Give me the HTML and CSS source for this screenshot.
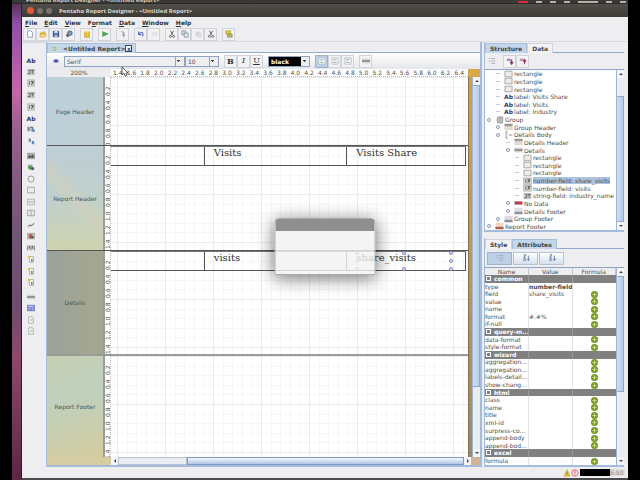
FILE: index.html
```html
<!DOCTYPE html>
<html lang="en">
<head>
  <meta charset="UTF-8" />
  <meta name="viewport" content="width=device-width, initial-scale=1.0" />
  <title>Pentaho Report Designer</title>
  <link rel="stylesheet" href="styles.css">
</head>
<body>

  <svg class="sprite" aria-hidden="true">
    <symbol id="i-new" viewBox="0 0 10 10"><path d="M2 1h4l2 2v6H2z" fill="#fff" stroke="#7d8fb5"/></symbol>
    <symbol id="i-open" viewBox="0 0 10 10"><path d="M1 3h3l1-1h3v6H1z" fill="#d9b24a"/><path d="M2 5h7L8 9H1z" fill="#f4d878" stroke="#b8923a" stroke-width=".5"/></symbol>
    <symbol id="i-save" viewBox="0 0 10 10"><path d="M1 1h8v8H1z" fill="#4b5f9c"/><path d="M3 1h4v3H3z" fill="#dfe5f2"/><path d="M3 6h4v3H3z" fill="#a9b8d8"/></symbol>
    <symbol id="i-publish" viewBox="0 0 10 10"><circle cx="6" cy="4" r="3" fill="#7e9cb4" stroke="#4d6478"/><path d="M1 6l3-1 1 3-2 1z" fill="#555"/></symbol>
    <symbol id="i-db" viewBox="0 0 10 10"><path d="M2 2h6v7H2z" fill="#ebc733"/><ellipse cx="5" cy="2" rx="3" ry="1" fill="#f8e68a"/><path d="M2 2v7h6V2" fill="none" stroke="#b98f1c" stroke-width=".8"/></symbol>
    <symbol id="i-run" viewBox="0 0 10 10"><path d="M2 2l7 3-7 3z" fill="#3fb04b" stroke="#2a8a38" stroke-width=".5"/></symbol>
    <symbol id="i-step" viewBox="0 0 10 10"><path d="M3 2l3 1v6M4 6h3" fill="none" stroke="#777"/></symbol>
    <symbol id="i-undo" viewBox="0 0 10 10"><path d="M2 2v4h4M2 6c2-5 7-3 5 2" fill="none" stroke="#5567c2" stroke-width="1.3"/></symbol>
    <symbol id="i-redo" viewBox="0 0 10 10"><path d="M8 2v4H4M8 6C6 1 1 3 3 8" fill="none" stroke="#d2d2d6"/></symbol>
    <symbol id="i-cut" viewBox="0 0 10 10"><path d="M3 1l3 5M7 1L4 6" stroke="#444" fill="none"/><circle cx="3" cy="8" r="1.3" fill="none" stroke="#555"/><circle cx="7" cy="8" r="1.3" fill="none" stroke="#555"/></symbol>
    <symbol id="i-copy" viewBox="0 0 10 10"><path d="M1 1h5v5H1z" fill="#c5d2d6" stroke="#8a9ca6"/><path d="M4 4h5v5H4z" fill="#dfe8ea" stroke="#7f949e"/></symbol>
    <symbol id="i-paste" viewBox="0 0 10 10"><path d="M2 2h5v6H2z" fill="#d5d5d8"/><path d="M5 4h4v5H5z" fill="#e4e4e6" stroke="#c4c4c8" stroke-width=".5"/></symbol>
    <symbol id="i-layers" viewBox="0 0 10 10"><path d="M1 1h6v4H1z" fill="#e3cf3e" stroke="#9a8a22" stroke-width=".6"/><path d="M3 5h6v4H3z" fill="#b9b46a" stroke="#77713a" stroke-width=".6"/></symbol>
    <symbol id="i-doc" viewBox="0 0 10 10"><path d="M1 1h6v8H1z" fill="#cfe0c8"/><path d="M2 3h5M2 5h5M2 7h4" stroke="#8fae92"/></symbol>
    <symbol id="i-eye" viewBox="0 0 10 10"><ellipse cx="5" cy="5" rx="4" ry="2.3" fill="#9aa2d4"/><circle cx="5" cy="5" r="1.8" fill="#3b3f8e"/></symbol>
    <symbol id="i-text" viewBox="0 0 10 10"><path d="M0 1h10v8H0z" fill="#c6c6c6"/><path d="M2 3h2v4M1 7h3M5 3h4M7 3v4" stroke="#555" fill="none"/></symbol>
    <symbol id="i-num" viewBox="0 0 10 10"><path d="M0 1h10v8H0z" fill="#d2d2d2" stroke="#999" stroke-width=".6"/><path d="M3 3v4M5 3h3L6 5h2L5 7" stroke="#444" fill="none"/></symbol>
    <symbol id="i-field" viewBox="0 0 10 10"><path d="M0 2h8v6H0z" fill="#b8bcc2"/><path d="M2 3v4M4 3h3v3" stroke="#555" fill="none"/><circle cx="8" cy="7" r="2" fill="#6d90c4"/></symbol>
    <symbol id="i-small" viewBox="0 0 10 10"><path d="M2 2h3v4H2z" fill="#888"/><path d="M6 5h3v4H6z" fill="#5a8ac6"/></symbol>
    <symbol id="i-image" viewBox="0 0 10 10"><path d="M0 1h10v8H0z" fill="#a9a9a9"/><path d="M1 7l2-3 2 2 2-3 2 4z" fill="#3c4a3c"/></symbol>
    <symbol id="i-imagef" viewBox="0 0 10 10"><path d="M1 2h6v4H1z" fill="#9ab0a0"/><circle cx="4" cy="6" r="2.5" fill="#4fa04c"/><circle cx="7" cy="7" r="2" fill="#4c5a78"/></symbol>
    <symbol id="i-ellipse" viewBox="0 0 10 10"><circle cx="5" cy="5" r="3.8" fill="#eee" stroke="#888"/></symbol>
    <symbol id="i-rect" viewBox="0 0 10 10"><path d="M.5 1.5h9v7h-9z" fill="#ececea" stroke="#999"/></symbol>
    <symbol id="i-hline" viewBox="0 0 10 10"><path d="M.5 1.5h9v7h-9zM1 5h8" fill="#e8e8e8" stroke="#aaa"/></symbol>
    <symbol id="i-vline" viewBox="0 0 10 10"><path d="M.5 1.5h9v7h-9zM5 2v6" fill="#e8e8e8" stroke="#999"/></symbol>
    <symbol id="i-spark" viewBox="0 0 10 10"><path d="M1 7l3-2 1 1 4-3" fill="none" stroke="#777" stroke-width="1.3"/></symbol>
    <symbol id="i-chart" viewBox="0 0 10 10"><path d="M0 1h10v8H0z" fill="#b9b0ae"/><path d="M3 3h3v5H3z" fill="#b5433d"/><path d="M6 5h2v3H6z" fill="#555"/></symbol>
    <symbol id="i-barcode" viewBox="0 0 10 10"><path d="M1 2v6M3 2v4M5 2v6M7 2v4M9 2v6" stroke="#444"/></symbol>
    <symbol id="i-sub" viewBox="0 0 10 10"><path d="M3 2h5v7H3z" fill="#fff" stroke="#999"/><path d="M1 1h3v3H1z" fill="#e6c33a"/><path d="M5 5h2v3H5z" fill="#777"/></symbol>
    <symbol id="i-band" viewBox="0 0 10 10"><path d="M0 2h10v6H0z" fill="#d5d5d5"/><path d="M0 4h10v2H0z" fill="#858585"/></symbol>
    <symbol id="i-crosstab" viewBox="0 0 10 10"><path d="M0 1h10v8H0z" fill="#7f86cf"/><path d="M2 3h6M2 6h2M6 6h2" stroke="#e4e6fa"/></symbol>
    <symbol id="i-page" viewBox="0 0 10 10"><path d="M2 1h5l1 2v6H2z" fill="#f4f4f4" stroke="#a0a8a0"/><path d="M4 5h3" stroke="#888"/></symbol>
    <symbol id="i-hband" viewBox="0 0 10 10"><path d="M0 1h10v8H0z" fill="#dcdcd4"/><path d="M0 1h10v3H0z" fill="#9a9a92"/></symbol>
    <symbol id="i-fband" viewBox="0 0 10 10"><path d="M0 1h10v8H0z" fill="#dcdce4"/><path d="M0 6h10v3H0z" fill="#8e8e98"/></symbol>
    <symbol id="i-rband" viewBox="0 0 10 10"><path d="M0 1h10v8H0z" fill="#f0d8c4"/><path d="M0 6h10v3H0z" fill="#a5624e"/></symbol>
    <symbol id="i-nodata" viewBox="0 0 10 10"><path d="M0 3h10v4H0z" fill="#b0434f"/></symbol>
    <symbol id="i-group" viewBox="0 0 10 10"><path d="M3 1Q1 5 3 9" fill="none" stroke="#777"/><path d="M4 1h5v8H4z" fill="#bbb" stroke="#777" stroke-width=".6"/></symbol>
    <symbol id="i-body" viewBox="0 0 10 10"><path d="M4 1H2v8h2M5 5h5" fill="none" stroke="#777"/></symbol>
    <symbol id="i-list" viewBox="0 0 10 10"><path d="M1 2h2M1 5h2M4 2h5M4 5h5M4 8h5" stroke="#a0a4ac"/></symbol>
    <symbol id="i-expand" viewBox="0 0 10 10"><path d="M1 2h5v3H1z" fill="#a88fc0"/><path d="M7 3v6M5 6l2 3 2-3" stroke="#7a3a72" fill="none" stroke-width="1.4"/></symbol>
    <symbol id="i-collapse" viewBox="0 0 10 10"><path d="M1 2h5v3H1z" fill="#b89ab0"/><path d="M7 9V4M5 6l2-3 2 3" stroke="#a03458" fill="none" stroke-width="1.4"/></symbol>
    <symbol id="i-sort" viewBox="0 0 10 10"><path d="M2 1h3L2 4h3M2 9l1-4 2 4M8 2v6M6 6l2 2 2-2" stroke="#5a6a9a" fill="none"/></symbol>
    <symbol id="i-align" viewBox="0 0 10 10"><path d="M1 1h8v8H1z" fill="#f6f6f6" stroke="#b8bcc4"/><path d="M3 3h4M3 5h2M3 7h4" stroke="#a0a4ac"/></symbol>
    <symbol id="i-plus" viewBox="0 0 10 10"><circle cx="5" cy="5" r="5" fill="#769626"/><path d="M5 2v6M2 5h6" stroke="#c8da86" stroke-width="1.6"/></symbol>
    <symbol id="i-warn" viewBox="0 0 10 10"><path d="M5 1l4 8H1z" fill="#f0c640" stroke="#b08a28" stroke-width=".6"/><path d="M5 4v3" stroke="#555"/></symbol>
    <symbol id="i-error" viewBox="0 0 10 10"><circle cx="5" cy="5" r="4" fill="#fbe6e6" stroke="#d0565a"/><path d="M5 2v4M5 7v1" stroke="#c8383c"/></symbol>
  </svg>

  <div class="desktop">
    <div class="top-panel">
      <span class="panel-title">Pentaho Report Designer - &lt;Untitled Report&gt;</span>
      <span class="tray"><i class="rec"></i><i></i><i></i><i></i><i class="wide"></i><i></i><i></i></span>
    </div>

    <div class="window">
      <header class="titlebar">
        <span class="wm close"></span><span class="wm"></span><span class="wm"></span>
        <h1>Pentaho Report Designer - &lt;Untitled Report&gt;</h1>
      </header>

      <nav class="menubar">
        <a href="#"><u>F</u>ile</a>
        <a href="#"><u>E</u>dit</a>
        <a href="#"><u>V</u>iew</a>
        <a href="#">F<u>o</u>rmat</a>
        <a href="#"><u>D</u>ata</a>
        <a href="#"><u>W</u>indow</a>
        <a href="#"><u>H</u>elp</a>
      </nav>

      <div class="toolbar main-tools">
        <button aria-label="New"><svg><use href="#i-new"/></svg></button>
        <button aria-label="Open"><svg><use href="#i-open"/></svg></button>
        <button aria-label="Save"><svg><use href="#i-save"/></svg></button>
        <button aria-label="Publish"><svg><use href="#i-publish"/></svg></button>
        <button class="sep" aria-label="Add datasource"><svg><use href="#i-db"/></svg></button>
        <button class="sep" aria-label="Preview"><svg><use href="#i-run"/></svg></button>
        <button class="sep" aria-label="Wizard"><svg><use href="#i-step"/></svg></button>
        <button class="sep" aria-label="Undo"><svg><use href="#i-undo"/></svg></button>
        <button aria-label="Redo"><svg><use href="#i-redo"/></svg></button>
        <button class="sep" aria-label="Cut"><svg><use href="#i-cut"/></svg></button>
        <button aria-label="Copy"><svg><use href="#i-copy"/></svg></button>
        <button aria-label="Paste"><svg><use href="#i-paste"/></svg></button>
        <button aria-label="Delete"><svg><use href="#i-cut"/></svg></button>
        <button class="sep" aria-label="Layers"><svg><use href="#i-layers"/></svg></button>
      </div>

      <main class="workspace">
        <aside class="palette">
          <div class="group fields">
            <b>Ab</b>
            <svg><use href="#i-text"/></svg>
            <svg><use href="#i-num"/></svg>
            <svg><use href="#i-text"/></svg>
            <svg><use href="#i-num"/></svg>
            <b>Ab</b>
            <svg><use href="#i-field"/></svg>
            <svg><use href="#i-small"/></svg>
          </div>
          <div class="group shapes">
            <svg><use href="#i-image"/></svg>
            <svg><use href="#i-imagef"/></svg>
            <svg><use href="#i-ellipse"/></svg>
            <svg><use href="#i-rect"/></svg>
            <svg><use href="#i-hline"/></svg>
            <svg><use href="#i-vline"/></svg>
            <svg><use href="#i-spark"/></svg>
            <svg><use href="#i-chart"/></svg>
            <svg><use href="#i-barcode"/></svg>
            <svg><use href="#i-sub"/></svg>
            <svg><use href="#i-sub"/></svg>
            <svg><use href="#i-sub"/></svg>
          </div>
          <div class="group bands">
            <svg><use href="#i-band"/></svg>
            <svg><use href="#i-crosstab"/></svg>
            <svg><use href="#i-page"/></svg>
            <svg><use href="#i-page"/></svg>
          </div>
        </aside>

        <section class="editor">
          <div class="tabs">
            <button class="tab active doc-tab"><svg><use href="#i-doc"/></svg>&lt;Untitled Report&gt;<span class="close-tab">x</span></button>
          </div>
          <div class="toolbar format-tools">
            <button class="flat" aria-label="Show"><svg><use href="#i-eye"/></svg></button>
            <select class="font-family" aria-label="Font"><option>Serif</option></select>
            <select class="font-size" aria-label="Size"><option>10</option></select>
            <button class="letter"><b>B</b></button>
            <button class="letter"><i>I</i></button>
            <button class="letter"><u>U</u></button>
            <select class="font-color" aria-label="Color"><option>black</option></select>
            <button class="pressed" aria-label="Left"><svg><use href="#i-align"/></svg></button>
            <button aria-label="Center"><svg><use href="#i-align"/></svg></button>
            <button aria-label="Right"><svg><use href="#i-align"/></svg></button>
            <button class="sep" aria-label="Link"><svg><use href="#i-band"/></svg></button>
          </div>

          <div class="ruler-row">
            <span class="zoom">200%</span>
            <div class="h-ruler" id="hRuler"></div>
            <span class="ruler-end"></span>
            <svg class="cursor" viewBox="0 0 8 10"><path d="M1 0v8l2-2 1 3 2-1-1-2h2z" fill="#fff" stroke="#333" stroke-width=".8"/></svg>
          </div>

          <div class="canvas-row">
            <div class="bands-area">
              <div class="band page-header">
                <div class="band-name">Page Header</div>
                <div class="v-ruler"></div>
                <div class="sheet"></div>
              </div>
              <div class="band report-header">
                <div class="band-name">Report Header</div>
                <div class="v-ruler"></div>
                <div class="sheet">
                  <div class="cells"><div></div><div>Visits</div><div>Visits Share</div></div>
                </div>
              </div>
              <div class="band details">
                <div class="band-name">Details</div>
                <div class="v-ruler"></div>
                <div class="sheet">
                  <div class="cells">
                    <div></div><div>visits</div>
                    <div>share_visits
                      <span class="selection"><i></i><i></i><i></i><i></i><i></i><i></i><i></i><i></i><i></i></span>
                    </div>
                  </div>
                </div>
              </div>
              <div class="band report-footer">
                <div class="band-name">Report Footer</div>
                <div class="v-ruler"></div>
                <div class="sheet"></div>
              </div>
            </div>
            <div class="page-edge"></div>
            <div class="scroll-v canvas-scroll"><span class="arrow up"></span><span class="thumb"></span><span class="trough"></span><span class="arrow down"></span></div>
          </div>
          <div class="hscroll-row">
            <div class="under-bands"></div>
            <div class="scroll-h"><span class="arrow left"></span><span class="trough"></span><span class="thumb"></span><span class="arrow right"></span></div>
            <div class="corner"></div>
          </div>
        </section>

        <aside class="side">
          <section class="pane structure">
            <div class="tabs"><button class="tab active">Structure</button><button class="tab">Data</button></div>
            <div class="toolbar tree-tools">
              <button class="flat" aria-label="List"><svg><use href="#i-list"/></svg></button>
              <button class="sep" aria-label="Expand"><svg><use href="#i-expand"/></svg></button>
              <button aria-label="Collapse"><svg><use href="#i-collapse"/></svg></button>
            </div>
            <div class="pane-body">
              <ul class="tree">
                <li class="l2"><svg><use href="#i-rect"/></svg><span>rectangle</span></li>
                <li class="l2"><svg><use href="#i-rect"/></svg><span>rectangle</span></li>
                <li class="l2"><svg><use href="#i-rect"/></svg><span>rectangle</span></li>
                <li class="l2"><b>Ab</b><span>label: Visits Share</span></li>
                <li class="l2"><b>Ab</b><span>label: Visits</span></li>
                <li class="l2"><b>Ab</b><span>label: Industry</span></li>
                <li class="l1 open"><svg><use href="#i-group"/></svg><span>Group</span></li>
                <li class="l2 closed"><svg><use href="#i-hband"/></svg><span>Group Header</span></li>
                <li class="l2 open"><svg><use href="#i-body"/></svg><span>Details Body</span></li>
                <li class="l3"><svg><use href="#i-hband"/></svg><span>Details Header</span></li>
                <li class="l3 open"><svg><use href="#i-band"/></svg><span>Details</span></li>
                <li class="l4"><svg><use href="#i-rect"/></svg><span>rectangle</span></li>
                <li class="l4"><svg><use href="#i-rect"/></svg><span>rectangle</span></li>
                <li class="l4"><svg><use href="#i-rect"/></svg><span>rectangle</span></li>
                <li class="l4 selected"><svg><use href="#i-num"/></svg><span>number-field: share_visits</span></li>
                <li class="l4"><svg><use href="#i-num"/></svg><span>number-field: visits</span></li>
                <li class="l4"><svg><use href="#i-text"/></svg><span>string-field: industry_name</span></li>
                <li class="l3 closed"><svg><use href="#i-nodata"/></svg><span>No Data</span></li>
                <li class="l3 closed"><svg><use href="#i-fband"/></svg><span>Details Footer</span></li>
                <li class="l2 closed"><svg><use href="#i-fband"/></svg><span>Group Footer</span></li>
                <li class="l1 closed"><svg><use href="#i-rband"/></svg><span>Report Footer</span></li>
              </ul>
              <div class="scroll-v tree-scroll"><span class="arrow up"></span><span class="trough"></span><span class="thumb"></span><span class="arrow down"></span></div>
            </div>
          </section>

          <section class="pane attributes">
            <div class="tabs"><button class="tab">Style</button><button class="tab active">Attributes</button></div>
            <div class="toolbar attr-tools">
              <button class="pressed" aria-label="Grouped"><svg><use href="#i-list"/></svg></button>
              <button aria-label="Sort ascending"><svg><use href="#i-sort"/></svg></button>
              <button aria-label="Sort descending"><svg><use href="#i-sort"/></svg></button>
            </div>
            <div class="pane-body">
              <table>
                <thead><tr><th>Name</th><th>Value</th><th>Formula</th></tr></thead>
                <tbody id="attrRows"></tbody>
              </table>
              <div class="scroll-v attr-scroll"><span class="arrow up"></span><span class="thumb"></span><span class="trough"></span><span class="arrow down"></span></div>
            </div>
          </section>
        </aside>
      </main>

      <footer class="statusbar">
        <span class="message"></span>
        <svg><use href="#i-warn"/></svg>
        <svg><use href="#i-error"/></svg>
        <span class="memory"></span>
        <span class="clock">6:50</span>
      </footer>

      <div class="popup"><div class="popup-title"></div></div>
    </div>
  </div>

  <script>
    // horizontal ruler, 1.4 to 6.4
    const hRuler = document.getElementById('hRuler');
    for (let i = 14; i <= 64; i += 2) {
      const s = document.createElement('span');
      s.textContent = (i / 10).toFixed(1);
      hRuler.appendChild(s);
    }

    // every band has its own ruler starting at zero
    document.querySelectorAll('.v-ruler').forEach(r => {
      for (let i = 2; i <= 14; i += 2) {
        const s = document.createElement('span');
        s.textContent = (i / 10).toFixed(1);
        r.appendChild(s);
      }
    });

    const attributes = [
      ['common', [['type', 'number-field'], ['field', 'share_visits'], ['value'], ['name'], ['format', '#.#%'], ['if-null']]],
      ['query-m...', [['data-format'], ['style-format']]],
      ['wizard', [['aggregation...'], ['aggregation...'], ['labels-detail...'], ['show-chang...']]],
      ['html', [['class'], ['name'], ['title'], ['xml-id'], ['surpress-co...'], ['append-body'], ['append-bod...']]],
      ['excel', [['formula']]]
    ];

    let rows = '';
    attributes.forEach(([group, items]) => {
      rows += `<tr class="group-row"><td><i class="box"></i>${group}</td><td></td><td></td></tr>`;
      items.forEach(([name, value]) => {
        const isType = name === 'type';
        rows += `<tr><td>${name}</td><td class="${isType ? 'strong' : ''}">${value || ''}</td>` +
          `<td>${isType ? '' : '<svg><use href="#i-plus"/></svg>'}</td></tr>`;
      });
    });
    document.getElementById('attrRows').innerHTML = rows;
  </script>

</body>
</html>
```
FILE: styles.css
```css
*, *::before { box-sizing: border-box; margin: 0; padding: 0; }

body {
  font-family: "DejaVu Sans", sans-serif;
  font-size: 6px;
  line-height: 7px;
  color: #4c4c4c;
  background: #000;
  overflow: hidden;
}

.sprite { position: absolute; width: 0; height: 0; }

svg { display: block; width: 8px; height: 8px; flex: none; }

button, select {
  font: inherit;
  color: inherit;
  border: 1px solid #d0d3da;
  background: #f3f3f5;
}

button {
  display: flex;
  align-items: center;
  justify-content: center;
}

ul { list-style: none; }

.desktop {
  height: 100vh;
  border: solid #000;
  border-width: 0 12px;
  display: flex;
  flex-direction: column;
  background: linear-gradient(#4d2c4c, #9050a8 5%, #c566a8 19%, #97608c 27%, #6f5574 50%, #6d4c6c 64%, #8c4a6c 74%, #5c2645);
}

.top-panel {
  height: 4px;
  display: flex;
  align-items: flex-end;
  justify-content: space-between;
  padding: 0 2px 0 14px;
  overflow: hidden;
  background: #3a3935;
  color: #d0ccc2;
  border-bottom: 1px solid #2c2b28;
}

.panel-title { font: bold 6px/6px "Open Sans", sans-serif; }

.tray { display: flex; gap: 8px; height: 2px; }
.tray i { width: 6px; background: #b5b2aa; }
.tray .rec { width: 10px; background: #e0283c; }
.tray .wide { width: 20px; }

/* main window */
.window {
  position: relative;
  flex: 1;
  min-height: 0;
  margin-left: 9px;
  display: flex;
  flex-direction: column;
  background: #eeeef0;
  border-left: 1px solid #2a2028;
  border-bottom: 2px solid #4c4a4c;
}

.titlebar {
  height: 13px;
  display: flex;
  align-items: center;
  gap: 3px;
  padding-left: 5px;
  background: linear-gradient(#504f49, #3b3a36);
}

.titlebar h1 {
  font: bold 6px/8px "Open Sans", sans-serif;
  color: #dcd8ce;
  margin-left: 4px;
}

.wm { width: 6px; height: 6px; border-radius: 50%; background: #77746c; }
.wm.close { background: #e2573a; width: 7px; height: 7px; }

.menubar { display: flex; gap: 7px; height: 10px; padding-left: 3px; align-items: center; }
.menubar a { color: #333; text-decoration: none; font-weight: bold; }

.toolbar { display: flex; align-items: center; flex: none; }
.toolbar button { width: 13px; height: 13px; }
.toolbar .sep { margin-left: 5px; }
.toolbar .flat { border-color: transparent; background: none; }
.toolbar .pressed { background: #bccfe6; border-color: #9db3d0; }

.main-tools { height: 15px; padding-left: 1px; border-bottom: 1px solid #dcdce0; }
.main-tools button { background: #f1f1f3; }

.workspace { flex: 1; min-height: 0; display: flex; }

/* element palette */
.palette {
  width: 24px;
  padding: 12px 6px 0 0;
  display: flex;
  flex-direction: column;
  align-items: center;
  gap: 3px;
  border-top: 1px solid #d4d6dc;
}

.group { display: flex; flex-direction: column; justify-content: space-around; align-items: center; }
.group b { color: #33336c; }
.fields { height: 92px; }
.shapes { height: 138px; }
.bands { height: 46px; }

/* tabs */
.tabs { height: 11px; padding-top: 1px; display: flex; border-bottom: 1px solid #8fa9d0; }

.tab {
  height: 10px;
  padding: 0 4px;
  font-weight: bold;
  color: #444;
  border-bottom: none;
}

.tab.active { background: #c3d6eb; border-color: #a9bfdc; }

.doc-tab { gap: 4px; padding: 0 3px; }

.close-tab {
  width: 7px;
  height: 7px;
  margin-left: -4px;
  line-height: 5px;
  text-align: center;
  border: 1px solid #444;
  background: #fff;
}

/* editor */
.editor {
  flex: 1;
  min-width: 0;
  display: flex;
  flex-direction: column;
  border: solid #a4bbdc;
  border-width: 0 2px 2px 1px;
}

.format-tools { height: 16px; padding-left: 2px; background: linear-gradient(#fff, #e4e6ea); }

.format-tools select {
  height: 11px;
  appearance: none;
  border-radius: 0;
  padding-left: 2px;
  border-color: #8fa3c4;
  background:
    linear-gradient(45deg, transparent 50%, #444 50%) right 5px center / 2px 2px no-repeat,
    linear-gradient(135deg, #444 50%, transparent 50%) right 3px center / 2px 2px no-repeat,
    linear-gradient(#8fa3c4, #8fa3c4) right 8px top / 1px 100% no-repeat,
    #eeeef0;
}

.font-family { width: 121px; margin-left: 2px; }
.font-size { width: 34px; margin-right: 5px; }
.format-tools .font-color {
  width: 42px;
  margin: 0 5px;
  color: #fff;
  font-weight: bold;
  background:
    linear-gradient(45deg, transparent 50%, #444 50%) right 4px center / 2px 2px no-repeat,
    linear-gradient(135deg, #444 50%, transparent 50%) right 2px center / 2px 2px no-repeat,
    linear-gradient(#eeeef0, #eeeef0) right top / 8px 100% no-repeat,
    #000;
}

.letter { font: 8px/10px "DejaVu Serif", serif; color: #333; }

.ruler-row { position: relative; display: flex; height: 8px; background: #ececee; }
.zoom { width: 64px; text-align: center; line-height: 8px; }
.h-ruler { flex: 1; display: flex; padding-right: 2px; background: #fff; border-bottom: 1px dotted #bbb; }
.h-ruler span { flex: 1; text-align: center; }
.ruler-end { width: 12px; background: #daa748; }
.cursor { position: absolute; left: 74px; top: -2px; width: 8px; height: 10px; }

.canvas-row { flex: 1; min-height: 0; display: flex; }
.bands-area { flex: 1; min-width: 0; display: flex; flex-direction: column; }

.band { display: flex; min-height: 0; border-top: 1px solid #555; }
.page-header { flex: 69; border-top: none; }
.report-header { flex: 105; }
.details { flex: 104; }
.report-footer { flex: 102; border-top: 2px solid #9a9a96; }

.band-name {
  width: 56px;
  display: flex;
  align-items: center;
  justify-content: center;
  color: #4a5458;
}

.page-header .band-name { background: linear-gradient(100deg, #bdd0da, #bfcfd4); }
.report-header .band-name {
  background:
    linear-gradient(45deg, transparent 40%, #dbd3b466 50%, transparent 62%),
    linear-gradient(#bdced6, #c0d0cc 50%, #cfd2ae);
}
.details .band-name { background: linear-gradient(90deg, #9ba39a, #a5a78f); color: #50564e; }
.report-footer .band-name { background: linear-gradient(160deg, #c6cfb2, #bfd0bd 40%, #d4cc9e); }

.v-ruler {
  width: 8px;
  padding-top: 7px;
  display: flex;
  flex-direction: column;
  overflow: hidden;
  background: #fff;
  border-left: 2px solid #9a9e98;
  border-right: 1px dotted #bbb;
}

.v-ruler span {
  flex: none;
  height: 14px;
  writing-mode: vertical-rl;
  transform: rotate(180deg);
  text-align: center;
  line-height: 6px;
}

.sheet {
  flex: 1;
  min-width: 0;
  background:
    linear-gradient(90deg, #e9ecea 1px, transparent 1px) 6px 0 / 48px 48px,
    linear-gradient(#e9ecea 1px, transparent 1px) 0 0 / 48px 48px,
    repeating-linear-gradient(90deg, #f4f7f5 0 1px, transparent 1px 20%) 6px 0 / 48px 48px,
    repeating-linear-gradient(#f4f7f5 0 1px, transparent 1px 20%) 0 0 / 48px 48px,
    #fff;
}

.cells {
  display: grid;
  grid-template-columns: 94fr 143fr 119fr;
  height: 20px;
  margin-right: 2px;
  border-top: 1px solid #777;
  border-bottom: 1px solid #555;
  font: 10px/12px "DejaVu Serif", serif;
  color: #333;
}

.cells div { position: relative; padding-left: 9px; border-right: 1px solid #555; }

.selection {
  position: absolute;
  inset: -1px 12px -1px 8px;
  display: grid;
  grid-template-columns: repeat(3, 4px);
  justify-content: space-between;
  align-content: space-between;
}

.selection i { height: 4px; border-radius: 50%; background: #dfe4f8; border: 1px solid #7d8dc8; }
.selection i:nth-child(5) { visibility: hidden; }

.page-edge { width: 4px; background: linear-gradient(#cf9f4c, #bd9858 50%, #958a80); border-left: 1px solid #8a7040; }

/* scrollbars */
.scroll-v, .scroll-h { display: flex; background: #e9ecf1; }
.scroll-v { width: 8px; flex-direction: column; border-left: 1px solid #9fb5d6; }
.thumb { background: linear-gradient(90deg, #cfdff2, #b4cbe8); border: 1px solid #8fa9d0; border-left: none; }
.scroll-h .thumb { background: linear-gradient(#f2f7fd, #b0c8e6); border: 1px solid #7f9cc8; }

.arrow { width: 7px; height: 8px; flex: none; background: #f4f5f7; display: grid; place-items: center; }
.arrow::after { content: ""; border: 2px solid transparent; }
.arrow.up::after { border-bottom-color: #444; border-top: none; }
.arrow.down::after { border-top-color: #444; border-bottom: none; }
.arrow.left::after { border-right-color: #444; border-left: none; }
.arrow.right::after { border-left-color: #444; border-right: none; }

.canvas-scroll .thumb { flex: 300; }
.canvas-scroll .trough { flex: 62; }

.hscroll-row { display: flex; height: 8px; }
.under-bands { width: 64px; background: #d8cda2; }
.scroll-h { flex: 1; }
.scroll-h .trough { flex: 68; border: 1px solid #b4bfd0; }
.scroll-h .thumb { flex: 280; }
.corner { width: 9px; background: #d4b496; }

/* right column */
.side {
  width: 146px;
  padding: 0 4px 0 2px;
  display: flex;
  flex-direction: column;
  gap: 6px;
}

.pane {
  display: flex;
  flex-direction: column;
  min-height: 0;
  border: solid #a4bbdc;
  border-width: 0 0 2px 1px;
}

.structure { flex: 190; }
.attributes { flex: 229; }

.tree-tools { height: 16px; }
.attr-tools { height: 18px; padding-left: 2px; gap: 1px; }
.attr-tools button { width: 25px; background: linear-gradient(#fff, #d4e0ef); border-color: #b4c4da; }

.pane-body { flex: 1; min-height: 0; display: flex; background: #fff; border-top: 1px solid #8fa3c4; }

.tree { flex: 1; min-width: 0; display: flex; flex-direction: column; padding-left: 1px; }

.tree li {
  flex: 1;
  min-height: 0;
  display: flex;
  align-items: center;
  gap: 1px;
  white-space: nowrap;
}

.tree li::before {
  content: "";
  width: 4px;
  height: 1px;
  margin-right: 3px;
  background: #c3ccda;
}

.tree li.open::before, .tree li.closed::before {
  height: 4px;
  border: 1px solid #8a97b0;
  border-radius: 50%;
  background: #fff;
}

.tree svg, .tree b { width: 9px; }
.tree b { color: #33336c; }
.l1 { padding-left: 1px; }
.l2 { padding-left: 10px; }
.l3 { padding-left: 20px; }
.l4 { padding-left: 29px; }
.selected span { background: #adc3e0; }

.tree-scroll .trough { flex: 18; }
.tree-scroll .thumb { flex: 126; }

table { width: 131px; height: 100%; border-collapse: collapse; table-layout: fixed; }
th { font-weight: normal; background: #eeeef0; border-right: 1px solid #c4c8d0; }
th, td { height: 7px; line-height: 6px; overflow: hidden; white-space: nowrap; }
td { border-right: 1px solid #e2e2e4; }
td:last-child { border-right: none; }
td svg { width: 7px; height: 7px; margin: 0 auto; }
.strong { font-weight: bold; }

.group-row td { background: #808080; color: #fff; font-weight: bold; border-right-color: #999; }
.box { display: inline-block; width: 5px; height: 5px; margin: 0 3px 0 1px; border: 1px solid #fff; vertical-align: top; }

.attr-scroll .thumb { flex: 115; }
.attr-scroll .trough { flex: 65; }

/* status bar */
.statusbar { height: 11px; display: flex; align-items: center; padding-right: 3px; }
.message { flex: 1; }
.memory { width: 30px; height: 7px; margin-left: 1px; background: #000; }
.clock { width: 15px; color: #888; background: #ddd; }

/* half faded window on top of the canvas */
.popup {
  position: absolute;
  top: 214px;
  left: 50%;
  width: 101px;
  height: 57px;
  transform: translateX(-50%);
  border: 1px solid #aaa;
  border-radius: 4px 4px 0 0;
  background: rgba(243, 243, 243, 0.8);
  box-shadow: 0 3px 18px rgba(0, 0, 0, 0.55);
  overflow: hidden;
}

.popup-title { height: 12px; background: #8f8f8f; }
```
